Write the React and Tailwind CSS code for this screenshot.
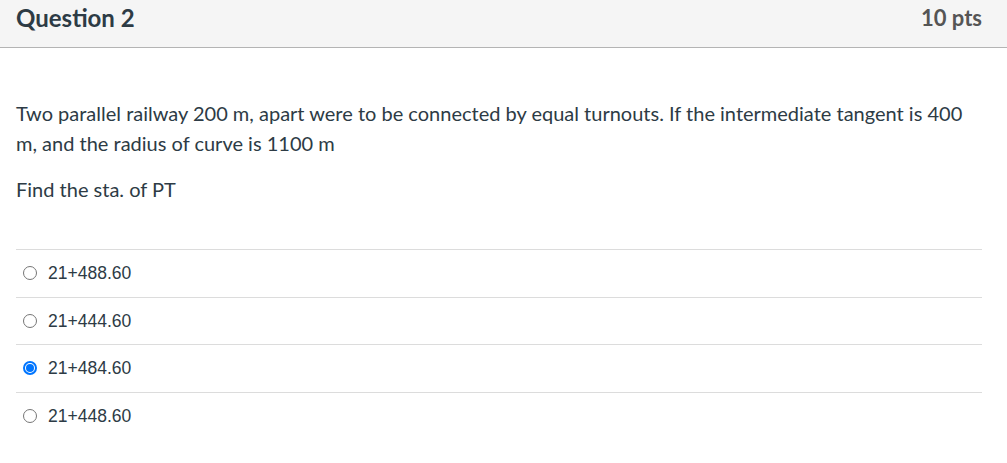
export default function App() {
  const answers = ["21+488.60", "21+444.60", "21+484.60", "21+448.60"];
  const selected = 2;
  return (
    <div className="w-[1007px] h-[463px] bg-white overflow-hidden" style={{ fontFamily: "Lato, 'Noto Sans', sans-serif" }}>
      {/* Header */}
      <div className="h-[48px] bg-[#f5f5f5] border-b border-[#b4b4b4] flex items-start justify-between pl-[16px] pr-[25px] pt-[2px]">
        <h2 className="text-[24px] font-bold text-[#2d3b45] leading-[32px]">Question 2</h2>
        <span className="text-[22px] font-bold text-[#555] leading-[32px]">10 pts</span>
      </div>

      {/* Body */}
      <div className="px-[16px] pt-[50px] text-[#2d3b45]">
        <p className="text-[20px] leading-[30px] pr-[6px]">
          Two parallel railway 200 m, apart were to be connected by equal turnouts. If the intermediate tangent is 400 m, and the radius of curve is 1100 m
        </p>
        <p className="text-[20px] leading-[30px] mt-[16px]">Find the sta. of PT</p>

        <div className="mt-[45px] mr-[9px] border-t border-[#dcdcdc]">
          {answers.map((a, i) => (
            <div key={a} className="h-[47.5px] border-b border-[#dcdcdc] last:border-b-0 flex items-center pl-[7px] gap-[11px]">
              {i === selected ? (
                <span className="w-[14px] h-[14px] rounded-full border-[2px] border-[#0075ff] flex items-center justify-center">
                  <span className="w-[8px] h-[8px] rounded-full bg-[#0075ff]" />
                </span>
              ) : (
                <span className="w-[14px] h-[14px] rounded-full border border-[#767676]" />
              )}
              <span className="text-[17.5px] text-[#2d3b45]" style={{ fontFamily: "'Liberation Sans', Arial, sans-serif" }}>{a}</span>
            </div>
          ))}
        </div>
      </div>
    </div>
  );
}
